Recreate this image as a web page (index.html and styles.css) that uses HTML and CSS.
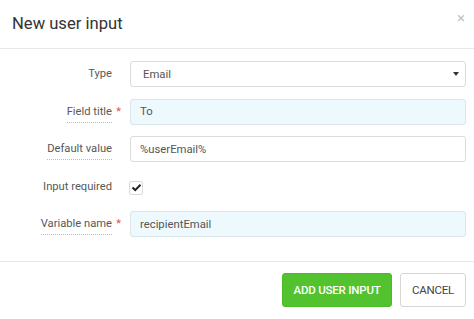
FILE: index.html
```html
<!DOCTYPE html>
<html>
<head>
<meta charset="utf-8">
<link rel="stylesheet" href="styles.css">
</head>
<body>
<div class="modal">
  <div class="modal-header">
    <h1 class="modal-title">New user input</h1>
    <span class="close">&times;</span>
  </div>
  <div class="modal-body">
    <div class="row">
      <label class="label"><span class="text">Type</span><span class="req"></span></label>
      <div class="control select">
        <span>Email</span>
        <span class="caret"></span>
      </div>
    </div>
    <div class="row">
      <label class="label"><span class="text help">Field title</span><span class="req">*</span></label>
      <div class="control filled"><span>To</span></div>
    </div>
    <div class="row">
      <label class="label"><span class="text help">Default value</span><span class="req"></span></label>
      <div class="control"><span>%userEmail%</span></div>
    </div>
    <div class="row">
      <label class="label"><span class="text">Input required</span><span class="req"></span></label>
      <div class="check-wrap">
        <span class="checkbox">
          <svg width="11" height="9" viewBox="0 0 11 9"><path d="M1.5 4.6 L4.2 7.1 L9.5 1.8" fill="none" stroke="#222" stroke-width="2"/></svg>
        </span>
      </div>
    </div>
    <div class="row">
      <label class="label"><span class="text help">Variable name</span><span class="req">*</span></label>
      <div class="control filled"><span>recipientEmail</span></div>
    </div>
  </div>
  <div class="modal-footer">
    <button class="btn btn-primary">ADD USER INPUT</button>
    <button class="btn btn-default">CANCEL</button>
  </div>
</div>
</body>
</html>
```
FILE: styles.css
```css
* { box-sizing: border-box; }
html, body { margin: 0; padding: 0; background: #fff; }
body { font-family: Roboto, "Liberation Sans", sans-serif; color: #555; }

.modal { width: 474px; }

.modal-header {
  height: 49px;
  border-bottom: 1px solid #e8e8e8;
  display: flex;
  align-items: flex-start;
  justify-content: space-between;
  padding: 0 8px 0 12px;
}
.modal-title {
  margin: 0;
  font-size: 16.6px;
  font-weight: 400;
  color: #333;
  line-height: 20px;
  padding-top: 14px;
}
.close {
  color: #c4c4c4;
  font-size: 15px;
  line-height: 15px;
  padding-top: 11px;
  padding-right: 1px;
}

.modal-body {
  padding: 12px 8px 24px 0;
  display: flex;
  flex-direction: column;
  gap: 11.5px;
}
.row {
  display: grid;
  grid-template-columns: 121px 1fr;
  column-gap: 9px;
  height: 26px;
  align-items: center;
}
.label {
  display: flex;
  justify-content: flex-end;
  align-items: baseline;
  font-size: 11.2px;
  color: #585858;
}
.label .text { line-height: 14px; }
.label .help {
  border-bottom: 1px dotted #bbb;
  padding-bottom: 3px;
  margin-bottom: -4px;
}
.req {
  width: 9px;
  text-align: right;
  color: #e05050;
  font-size: 11px;
}

.control {
  height: 26px;
  border: 1px solid #dcdcdc;
  border-radius: 3px;
  display: flex;
  align-items: center;
  padding-left: 9px;
  font-size: 11.3px;
  color: #555;
  background: #fff;
}
.control.filled {
  background: #eef9fd;
  border-color: #d9e6ec;
}
.select {
  padding-left: 12px;
  justify-content: space-between;
  padding-right: 6px;
}
.caret {
  width: 0; height: 0;
  border-left: 3px solid transparent;
  border-right: 3px solid transparent;
  border-top: 4px solid #333;
}

.check-wrap { display: flex; align-items: center; padding-top: 2px; }
.checkbox {
  width: 14px; height: 14px;
  border: 1px solid #dadada;
  border-radius: 2px;
  display: flex;
  align-items: center;
  justify-content: center;
  margin-left: -1px;
}
.checkbox svg { display: block; }

.modal-footer {
  border-top: 1px solid #e8e8e8;
  padding: 11px 8px 12px 0;
  display: flex;
  justify-content: flex-end;
  gap: 8px;
}
.btn {
  height: 34px;
  border-radius: 3px;
  font-family: Roboto, "Liberation Sans", sans-serif;
  font-size: 11.5px;
  font-weight: 500;
  letter-spacing: -0.2px;
  padding: 0;
  cursor: pointer;
}
.btn-primary {
  width: 110px;
  background: #52c22e;
  border: 1px solid #4cbb29;
  color: #fff;
}
.btn-default {
  width: 66px;
  background: #fff;
  border: 1px solid #d6d6d6;
  color: #444;
  font-weight: 400;
}
```
